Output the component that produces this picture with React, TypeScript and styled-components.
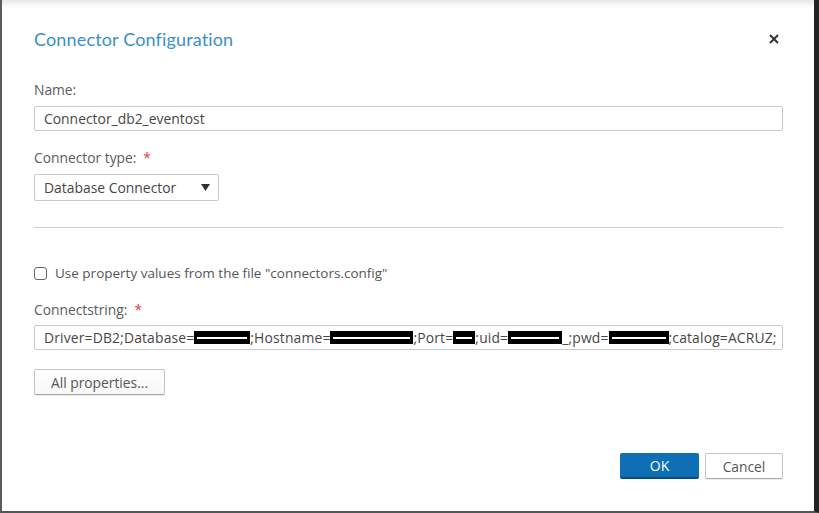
import React from "react";
import styled, { createGlobalStyle } from "styled-components";

const GlobalStyle = createGlobalStyle`
  html, body {
    margin: 0;
    padding: 0;
    background: #222;
  }
  * {
    box-sizing: border-box;
  }
`;

const titleFont = `"Lato", "Open Sans", "Liberation Sans", sans-serif`;
const font = `"Open Sans", "Lato", "Liberation Sans", sans-serif`;

const Dialog = styled.div`
  width: 819px;
  height: 513px;
  display: flex;
  flex-direction: column;
  border-left: 2px solid #5b5b5b;
  border-right: 5px solid #232323;
  border-bottom: 2px solid #555;
  background: linear-gradient(#e6e6e6 0px, #fbfbfb 6px, #fff 10px);
  padding: 28px 31px 0 32px;
  font-family: ${font};
  color: #555;
`;

const Header = styled.div`
  display: flex;
  align-items: center;
  justify-content: space-between;
  height: 22px;
`;

const Title = styled.h1`
  margin: 0;
  font-family: ${titleFont};
  font-size: 18px;
  font-weight: 400;
  color: #3b8fc8;
  letter-spacing: 0.15px;
`;

const CloseButton = styled.button`
  border: 0;
  background: none;
  padding: 0;
  margin-right: 4px;
  width: 10px;
  height: 10px;
  display: flex;
  cursor: pointer;
`;

const Label = styled.div<{ $top: number }>`
  margin-top: ${(p) => p.$top}px;
  font-size: 13.8px;
  line-height: 16px;
  color: #5c5c5c;
  display: flex;
  gap: 7px;
`;

const Required = styled.span`
  color: #e2403a;
`;

const TextBox = styled.div<{ $top: number; $spacing?: number }>`
  margin-top: ${(p) => p.$top}px;
  height: 25px;
  border: 1px solid #c9c9c9;
  border-radius: 2px;
  padding: 0 9px;
  display: flex;
  align-items: center;
  font-size: 13.9px;
  letter-spacing: ${(p) => p.$spacing ?? 0}px;
  color: #474747;
  white-space: nowrap;
  overflow: hidden;
`;

const Select = styled.div`
  margin-top: 8px;
  width: 185px;
  height: 27px;
  border: 1px solid #c9c9c9;
  border-radius: 2px;
  padding: 0 8px 0 9px;
  display: flex;
  align-items: center;
  justify-content: space-between;
  font-size: 13.9px;
  color: #474747;
`;

const Divider = styled.hr`
  margin: 26px 0 0;
  border: 0;
  border-top: 1px solid #cfcfcf;
`;

const CheckRow = styled.label`
  margin-top: 36px;
  display: flex;
  align-items: center;
  gap: 8px;
  font-size: 13.5px;
  color: #555;
`;

const Check = styled.span`
  width: 13px;
  height: 13px;
  border: 1px solid #666;
  border-radius: 3px;
  background: #fff;
`;

const Redact = styled.span<{ $w: number }>`
  display: inline-flex;
  align-items: center;
  flex-shrink: 0;
  width: ${(p) => p.$w}px;
  height: 13px;
  background: #000;
  padding: 0 3px;
  &::after {
    content: "";
    flex: 1;
    height: 2px;
    background: #fff;
  }
`;

const SecondaryButton = styled.button<{ $w: number; $top?: number }>`
  margin-top: ${(p) => p.$top ?? 0}px;
  width: ${(p) => p.$w}px;
  height: 26px;
  border: 1px solid #c3c3c3;
  border-bottom-color: #a9a9a9;
  border-radius: 2px;
  background: linear-gradient(#fff, #f7f7f7);
  box-shadow: 0 1px 0 rgba(0, 0, 0, 0.08);
  font-family: ${font};
  font-size: 13.8px;
  color: #555;
  padding: 0;
  cursor: pointer;
`;

const Footer = styled.div`
  margin-top: auto;
  margin-bottom: 32px;
  display: flex;
  justify-content: flex-end;
  gap: 6px;
`;

const PrimaryButton = styled.button`
  width: 79px;
  height: 26px;
  border: 0;
  border-bottom: 2px solid #0b4d7e;
  border-radius: 2px;
  background: #0e6fb4;
  font-family: ${font};
  font-size: 14px;
  color: #fff;
  padding: 0;
  cursor: pointer;
`;

const Cancel = styled(SecondaryButton)`
  background: #fff;
`;

export default function App() {
  return (
    <>
      <GlobalStyle />
      <Dialog>
        <Header>
          <Title>Connector Configuration</Title>
          <CloseButton aria-label="Close">
            <svg width="10" height="10" viewBox="0 0 10 10">
              <path d="M1 1 L9 9 M9 1 L1 9" stroke="#333" strokeWidth="2" />
            </svg>
          </CloseButton>
        </Header>

        <Label $top={32}>Name:</Label>
        <TextBox $top={8}>Connector_db2_eventost</TextBox>

        <Label $top={19}>
          Connector type: <Required>*</Required>
        </Label>
        <Select>
          Database Connector
          <svg width="9" height="7" viewBox="0 0 9 7">
            <polygon points="0,0 9,0 4.5,7" fill="#333" />
          </svg>
        </Select>

        <Divider />

        <CheckRow>
          <Check />
          Use property values from the file "connectors.config"
        </CheckRow>

        <Label $top={20}>
          Connectstring: <Required>*</Required>
        </Label>
        <TextBox $top={7} $spacing={0.15}>
          Driver=DB2;Database=<Redact $w={56} />;Hostname=
          <Redact $w={83} />;Port=<Redact $w={22} />;uid=
          <Redact $w={54} />_;pwd=<Redact $w={60} />;catalog=ACRUZ;
        </TextBox>

        <SecondaryButton $w={131} $top={19}>
          All properties...
        </SecondaryButton>

        <Footer>
          <PrimaryButton>OK</PrimaryButton>
          <Cancel $w={78}>Cancel</Cancel>
        </Footer>
      </Dialog>
    </>
  );
}
